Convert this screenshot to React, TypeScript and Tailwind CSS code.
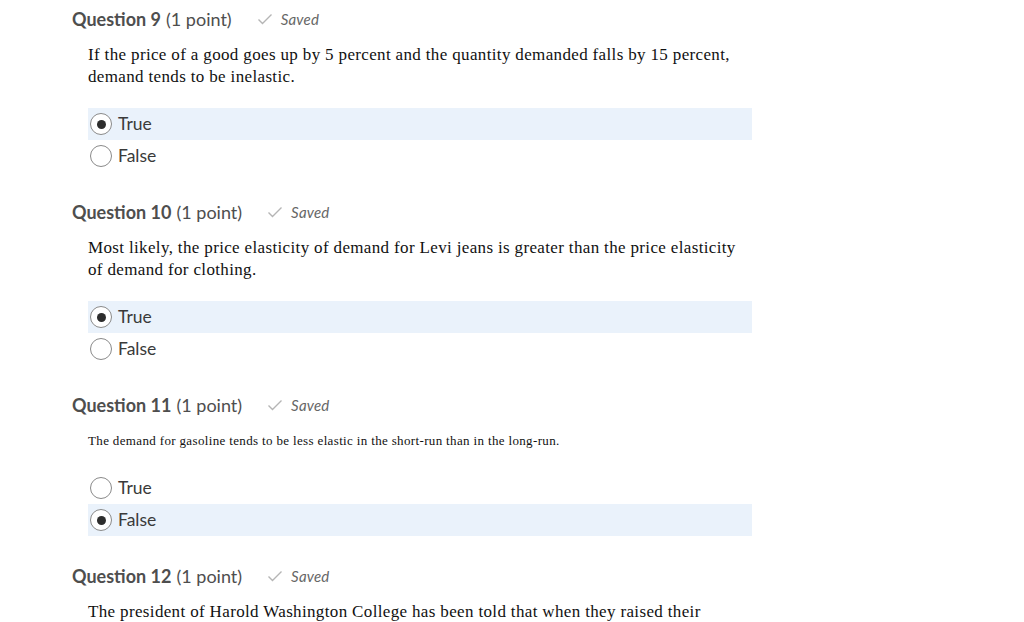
const SANS = "font-['Lato','Liberation_Sans',sans-serif]";
const SERIF = "font-['Liberation_Serif','Times_New_Roman',serif]";

type Question = {
  num: number;
  text: string;
  small?: boolean;
  answer?: "True" | "False";
};

const QUESTIONS: Question[] = [
  {
    num: 9,
    text: "If the price of a good goes up by 5 percent and the quantity demanded falls by 15 percent, demand tends to be inelastic.",
    answer: "True",
  },
  {
    num: 10,
    text: "Most likely, the price elasticity of demand for Levi jeans is greater than the price elasticity of demand for clothing.",
    answer: "True",
  },
  {
    num: 11,
    text: "The demand for gasoline tends to be less elastic in the short-run than in the long-run.",
    small: true,
    answer: "False",
  },
  {
    num: 12,
    text: "The president of Harold Washington College has been told that when they raised their",
  },
];

function Radio({ checked }: { checked: boolean }) {
  return (
    <span className="w-[22px] h-[22px] rounded-full border border-[#8a8a8a] bg-white flex items-center justify-center shrink-0">
      {checked && <span className="w-[9px] h-[9px] rounded-full bg-[#2d2d2d]" />}
    </span>
  );
}

function Option({ label, checked }: { label: string; checked: boolean }) {
  return (
    <div className={`h-8 flex items-center gap-[6px] pl-[2px] ${checked ? "bg-[#eaf2fb]" : ""}`}>
      <Radio checked={checked} />
      <span className={`${SANS} text-[17.5px] text-[#3a3a3a]`}>{label}</span>
    </div>
  );
}

function QuestionBlock({ q }: { q: Question }) {
  return (
    <div className="flex flex-col">
      <div className={`${SANS} flex items-center h-9 text-[18px] text-[#4e4e4e]`}>
        <span className="font-bold">Question {q.num}</span>
        <span className="ml-[5px]">(1 point)</span>
        <span className="ml-[25px] flex items-center gap-[8px]">
          <svg width="16" height="12" viewBox="0 0 16 12" fill="none">
            <path d="M1.5 6.5 L5.5 10.5 L14.5 1.5" stroke="#b5b5b5" strokeWidth="1.4" />
          </svg>
          <span className="italic text-[15px] tracking-[0.2px] text-[#666]">Saved</span>
        </span>
      </div>
      <div className="pl-4 pr-[272px] mt-[7px]">
        <p
          className={`${SERIF} text-[#111] ${
            q.small
              ? "text-[13px] tracking-[0.35px] leading-[22px]"
              : "text-[17px] tracking-[0.35px] leading-[22px]"
          }`}
        >
          {q.text}
        </p>
        {q.answer && (
          <div className="mt-[20px] flex flex-col">
            <Option label="True" checked={q.answer === "True"} />
            <Option label="False" checked={q.answer === "False"} />
          </div>
        )}
      </div>
    </div>
  );
}

export default function App() {
  return (
    <div className="w-[1024px] h-[622px] overflow-hidden bg-white pl-[72px] pt-[1px]">
      <div className="flex flex-col gap-[22px]">
        {QUESTIONS.map((q) => (
          <QuestionBlock key={q.num} q={q} />
        ))}
      </div>
    </div>
  );
}
